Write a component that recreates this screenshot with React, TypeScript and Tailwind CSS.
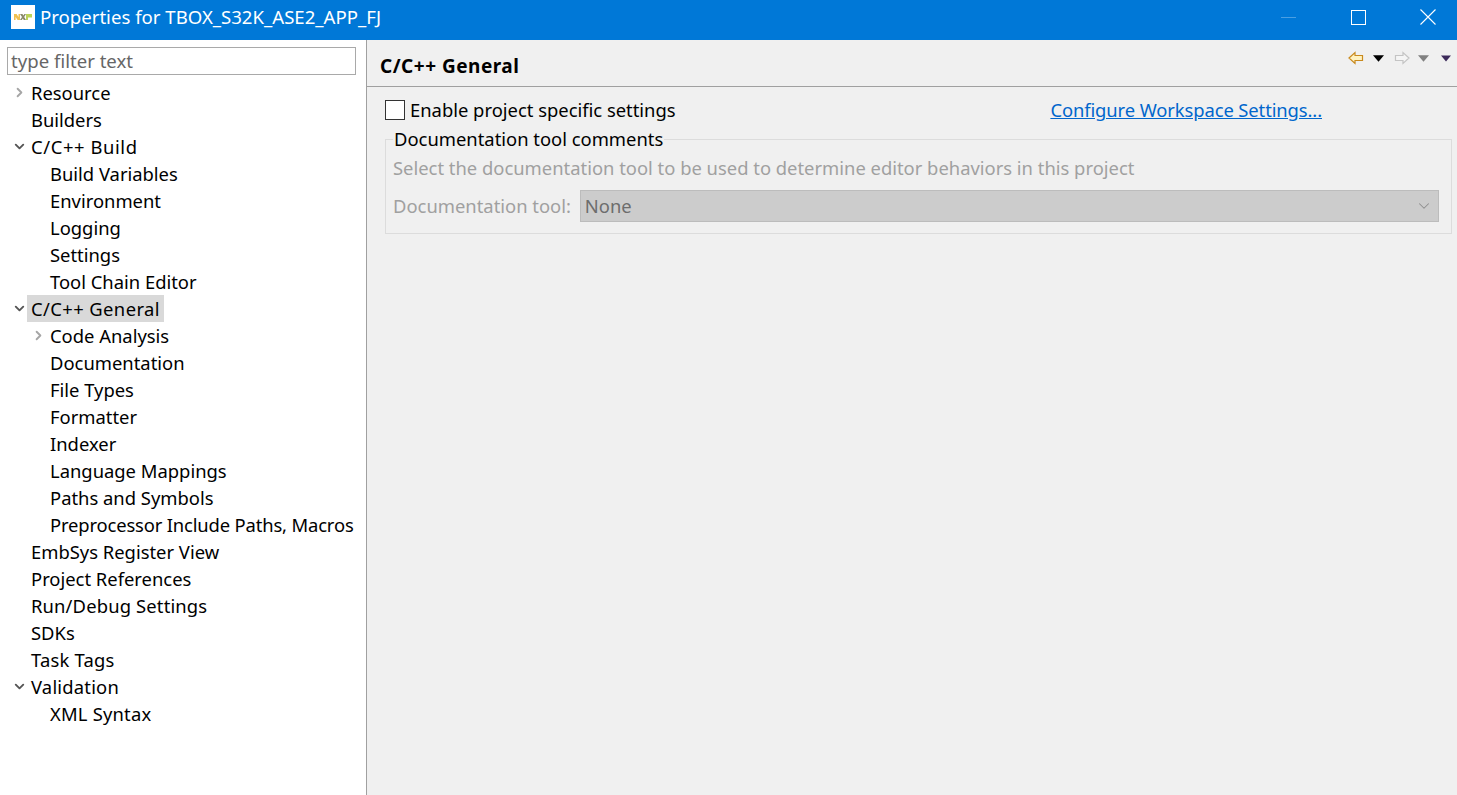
import { ChevronDown, ChevronRight } from "lucide-react";

type Node = { label: string; depth: 0 | 1; arrow?: "open" | "closed"; selected?: boolean; tracking?: string };

const tree: Node[] = [
  { label: "Resource", depth: 0, arrow: "closed" },
  { label: "Builders", depth: 0 },
  { label: "C/C++ Build", depth: 0, arrow: "open", tracking: "tracking-[0.6px]" },
  { label: "Build Variables", depth: 1 },
  { label: "Environment", depth: 1 },
  { label: "Logging", depth: 1 },
  { label: "Settings", depth: 1 },
  { label: "Tool Chain Editor", depth: 1 },
  { label: "C/C++ General", depth: 0, arrow: "open", selected: true, tracking: "tracking-[0.4px]" },
  { label: "Code Analysis", depth: 1, arrow: "closed" },
  { label: "Documentation", depth: 1 },
  { label: "File Types", depth: 1 },
  { label: "Formatter", depth: 1 },
  { label: "Indexer", depth: 1 },
  { label: "Language Mappings", depth: 1 },
  { label: "Paths and Symbols", depth: 1 },
  { label: "Preprocessor Include Paths, Macros", depth: 1, tracking: "tracking-[-0.15px]" },
  { label: "EmbSys Register View", depth: 0 },
  { label: "Project References", depth: 0 },
  { label: "Run/Debug Settings", depth: 0, tracking: "tracking-[0.15px]" },
  { label: "SDKs", depth: 0 },
  { label: "Task Tags", depth: 0, tracking: "tracking-[0.2px]" },
  { label: "Validation", depth: 0, arrow: "open", tracking: "tracking-[0.2px]" },
  { label: "XML Syntax", depth: 1, tracking: "tracking-[0.2px]" },
];

function TreeRow({ node }: { node: Node }) {
  return (
    <div className={node.depth === 0 ? "flex h-[27px] items-center pl-[12px]" : "flex h-[27px] items-center pl-[31px]"}>
      <span className="flex w-[15px] shrink-0 justify-center">
        {node.arrow === "open" && <ChevronDown size={15} strokeWidth={3} className="text-[#555555]" />}
        {node.arrow === "closed" && <ChevronRight size={15} strokeWidth={3} className="text-[#a6a6a6]" />}
      </span>
      <span className={node.selected ? "whitespace-nowrap bg-[#d9d9d9] px-[4px] leading-[27px]" : "whitespace-nowrap px-[4px] leading-[27px]"}>
        <span className={node.tracking}>{node.label}</span>
      </span>
    </div>
  );
}

function NxpLogo() {
  return (
    <svg width="24" height="24" viewBox="0 0 24 24" className="shrink-0">
      <rect width="24" height="24" fill="#ffffff" />
      <path d="M3 9h2.6l1.9 3V9H9v6H6.6L4.6 12v3H3z" fill="#f0c050" />
      <path d="M9 9h2.4l1 1.6L13.4 9H15l-1.8 3 1.8 3h-2.2l-1-1.6-1 1.6H9l2-3z" fill="#8a8a6a" />
      <path d="M15 9h6v3.6h-4V15h-2z" fill="#bcd35a" />
    </svg>
  );
}

function BackArrow() {
  return (
    <svg width="16" height="14" viewBox="0 0 16 14">
      <path d="M1 7 7 1.5V4.5H14.5V9.5H7V12.5Z" fill="#fff2bf" stroke="#c98a1e" strokeWidth="1.2" />
    </svg>
  );
}

function ForwardArrow() {
  return (
    <svg width="16" height="14" viewBox="0 0 16 14">
      <path d="M15 7 9 1.5V4.5H1.5V9.5H9V12.5Z" fill="#f5f5f5" stroke="#c4c4c4" strokeWidth="1.2" />
    </svg>
  );
}

function Caret({ color, width }: { color: string; width: number }) {
  return (
    <svg width={width} height="7" viewBox="0 0 12 7">
      <path d="M0 0H12L6 7Z" fill={color} />
    </svg>
  );
}

export default function App() {
  return (
    <div className="flex h-[795px] w-[1457px] flex-col overflow-hidden bg-[#f0f0f0] font-['Noto_Sans',sans-serif] text-[18.4px] text-black">
      <header className="flex h-[40px] shrink-0 items-center bg-[#0078d7] pb-[6px] pl-[11px] text-white">
        <NxpLogo />
        <span className="ml-[5px] text-[18.6px]">Properties for TBOX_S32K_ASE2_APP_FJ</span>
        <div className="ml-auto flex items-center">
          <span className="flex w-[70px] justify-center">
            <span className="h-px w-[15px] bg-[#4a9fe3]" />
          </span>
          <span className="mr-[6px] flex w-[70px] justify-center">
            <span className="h-[15px] w-[15px] border border-white" />
          </span>
          <span className="flex w-[58px] justify-center">
            <svg width="16" height="16" viewBox="0 0 16 16">
              <path d="M.5.5l15 15M15.5.5l-15 15" stroke="#ffffff" strokeWidth="1.1" />
            </svg>
          </span>
        </div>
      </header>
      <div className="flex min-h-0 flex-1">
        <aside className="w-[367px] shrink-0 border-r border-[#a0a0a0] bg-white">
          <div className="ml-[7px] mt-[7px] flex h-[28px] w-[349px] items-center border border-[#a9a9a9] pl-[3px] text-[18.6px] text-[#666666]">
            type filter text
          </div>
          <div className="mt-[4px]">
            {tree.map((node) => (
              <TreeRow key={node.label} node={node} />
            ))}
          </div>
        </aside>
        <main className="min-w-0 flex-1">
          <div className="flex h-[47px] border-b border-[#a0a0a0] pl-[13px]">
            <h1 className="mt-[12px] text-[19px] leading-[28px] font-bold tracking-[0.5px]">C/C++ General</h1>
            <div className="ml-auto mr-[6px] mt-[10px] flex h-[16px] items-center">
              <BackArrow />
              <span className="ml-[9px]"><Caret color="#000000" width={11} /></span>
              <span className="ml-[10px]"><ForwardArrow /></span>
              <span className="ml-[8px]"><Caret color="#808080" width={11} /></span>
              <span className="ml-[12px]"><Caret color="#3c2a5a" width={10} /></span>
            </div>
          </div>
          <div className="ml-[18px] mr-[5px]">
            <div className="mt-[13px] flex h-[20px] items-center">
              <span className="h-[20px] w-[20px] border border-[#333333] bg-white" />
              <span className="ml-[5px]">Enable project specific settings</span>
              <a className="ml-auto mr-[130px] tracking-[-0.1px] text-[#0066cc] underline">Configure Workspace Settings...</a>
            </div>
            <fieldset className="mt-[9px] h-[105px] border border-[#dcdcdc] pl-[7px] pr-[12px]">
              <legend className="px-[1px] leading-[20px]">Documentation tool comments</legend>
              <p className="mt-[5px] leading-[28px] text-[#a0a0a0]">
                Select the documentation tool to be used to determine editor behaviors in this project
              </p>
              <div className="mt-[8px] flex h-[32px] items-center">
                <span className="text-[#a0a0a0]">Documentation tool:</span>
                <div className="ml-[9px] flex h-[32px] flex-1 items-center border border-[#bcbcbc] bg-[#cccccc] pl-[4px] pr-[5px] text-[#6d6d6d]">
                  None
                  <ChevronDown size={18} strokeWidth={1.4} className="ml-auto text-[#8f8f8f]" />
                </div>
              </div>
            </fieldset>
          </div>
        </main>
      </div>
    </div>
  );
}
